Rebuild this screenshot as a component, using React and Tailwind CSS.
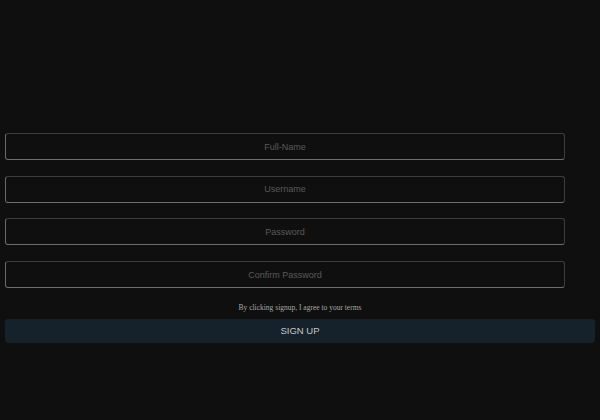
import React from 'react';

const fields = ['Full-Name', 'Username', 'Password', 'Confirm Password'];

const SignupForm = () => {
  return (
    <div className="w-full">
      <div className="flex flex-col gap-[15.7px] w-[560px] ml-[5px]">
        {fields.map((label) => (
          <input
            key={label}
            type={label.includes('Password') ? 'password' : 'text'}
            placeholder={label}
            className="h-[27px] w-full rounded-[3px] border border-t-[#3d3d3d] border-r-[#3d3d3d] border-b-[#6e6e6e] border-l-[#6a6a6a] bg-transparent text-center text-[9px] text-[#bbbbbb] placeholder:text-[#5a5a5a] outline-none"
          />
        ))}
      </div>
      <p className="mt-[13.5px] text-center text-[7.5px] leading-[11px] text-[#a8a8a8] font-['Liberation_Serif',serif]">
        By clicking signup, I agree to your terms
      </p>
      <button className="mt-[6.5px] ml-[5px] h-[24px] w-[590px] rounded-[3px] bg-[#15212b] text-[9.5px] text-[#c8c8c8]">
        SIGN UP
      </button>
    </div>
  );
};

const App = () => {
  return (
    <div className="h-[420px] w-[600px] bg-[#0f0f0f] pt-[133px] font-['Liberation_Sans',Arial,sans-serif]">
      <SignupForm />
    </div>
  );
};

export default App;
